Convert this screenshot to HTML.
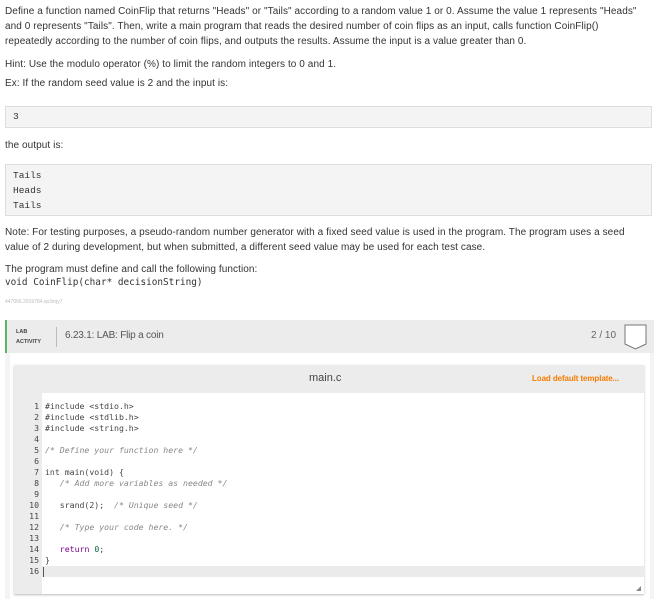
<!DOCTYPE html>
<html><head><style>
*{margin:0;padding:0;box-sizing:border-box}
body{width:660px;height:599px;overflow:hidden;background:#fff;font-family:"Liberation Sans",sans-serif;color:#333;position:relative}
.t{position:absolute;left:5px;font-size:10px;white-space:nowrap;letter-spacing:0.08px;color:#333}
.box{position:absolute;left:5px;width:647px;background:#f4f4f4;border:1px solid #ddd}
.m{font-family:"Liberation Mono",monospace;font-size:9.5px;color:#333}
.code{position:absolute;left:14px;font-family:"DejaVu Sans Mono","Liberation Mono",monospace;font-size:8.2px;line-height:11px;white-space:pre;color:#444}
.c{color:#888;font-style:italic}
.k{color:#708}
.n{color:#164}
</style></head><body>
<div class="t" style="top:6px">Define a function named CoinFlip that returns "Heads" or "Tails" according to a random value 1 or 0. Assume the value 1 represents "Heads"</div>
<div class="t" style="top:21px">and 0 represents "Tails". Then, write a main program that reads the desired number of coin flips as an input, calls function CoinFlip()</div>
<div class="t" style="top:36px">repeatedly according to the number of coin flips, and outputs the results. Assume the input is a value greater than 0.</div>
<div class="t" style="top:59px">Hint: Use the modulo operator (%) to limit the random integers to 0 and 1.</div>
<div class="t" style="top:78px">Ex: If the random seed value is 2 and the input is:</div>
<div class="box" style="top:106px;height:22px"><span class="m" style="position:absolute;left:7px;top:4px">3</span></div>
<div class="t" style="top:140px">the output is:</div>
<div class="box" style="top:164px;height:52px"><div class="m" style="position:absolute;left:7px;top:3px;line-height:15px">Tails<br>Heads<br>Tails</div></div>
<div class="t" style="top:227px">Note: For testing purposes, a pseudo-random number generator with a fixed seed value is used in the program. The program uses a seed</div>
<div class="t" style="top:242px">value of 2 during development, but when submitted, a different seed value may be used for each test case.</div>
<div class="t" style="top:264px">The program must define and call the following function:</div>
<div style="position:absolute;left:5px;top:277px;font-family:'DejaVu Sans Mono',monospace;font-size:9.4px;color:#333;white-space:nowrap">void CoinFlip(char* decisionString)</div>
<div class="t" style="top:299px;font-size:5px;color:#bbb;letter-spacing:0">447066.2919784.qx3zqy7</div>

<div style="position:absolute;left:5px;top:320px;width:649px;height:279px;background:#f4f4f4"></div>
<div style="position:absolute;left:5px;top:320px;width:649px;height:33px;background:#ececec;border-left:2px solid #5cb85c"></div>
<div style="position:absolute;left:16px;top:327px;font-size:5.5px;font-weight:bold;line-height:10px;color:#444">LAB<br>ACTIVITY</div>
<div style="position:absolute;left:56px;top:327px;width:1px;height:20px;background:#bbb"></div>
<div style="position:absolute;left:65px;top:330px;font-size:10px;color:#555;letter-spacing:-0.2px">6.23.1: LAB: Flip a coin</div>
<div style="position:absolute;left:591px;top:330px;font-size:10px;color:#666">2 / 10</div>
<svg style="position:absolute;left:624px;top:324px" width="24" height="27"><path d="M1 1H22V20L11.5 25L1 20Z" fill="#fff" stroke="#777" stroke-width="1"/></svg>
<div style="position:absolute;left:10px;top:353px;width:640px;height:246px;background:#fff"></div>
<div style="position:absolute;left:14px;top:365px;width:630px;height:229px;background:#fff;box-shadow:0 1px 2px #bbb"></div>
<div style="position:absolute;left:14px;top:365px;width:630px;height:28px;background:#ececec"></div>
<div style="position:absolute;left:309px;top:372px;font-size:11px;color:#444">main.c</div>
<div style="position:absolute;left:532px;top:374px;font-size:8px;font-weight:bold;color:#f57c00;letter-spacing:-0.1px">Load default template...</div>
<div style="position:absolute;left:14px;top:393px;width:28px;height:201px;background:#ececec"></div>
<div style="position:absolute;left:42px;top:566px;width:602px;height:11px;background:#ebebeb"></div>
<div style="position:absolute;left:43px;top:567px;width:1px;height:10px;background:#555"></div>
<div class="code" style="top:401px;left:12px;width:27px;text-align:right;color:#444"> 1
 2
 3
 4
 5
 6
 7
 8
 9
10
11
12
13
14
15
16</div>
<div class="code" style="top:401px;left:45px">#include &lt;stdio.h&gt;
#include &lt;stdlib.h&gt;
#include &lt;string.h&gt;

<span class="c">/* Define your function here */</span>

int main(void) {
   <span class="c">/* Add more variables as needed */</span>

   srand(2);  <span class="c">/* Unique seed */</span>

   <span class="c">/* Type your code here. */</span>

   <span class="k">return</span> <span class="n">0</span>;
}
</div>
<svg style="position:absolute;left:636px;top:586px" width="6" height="6"><path d="M5 0V5H0Z" fill="#888"/></svg>
</body></html>
